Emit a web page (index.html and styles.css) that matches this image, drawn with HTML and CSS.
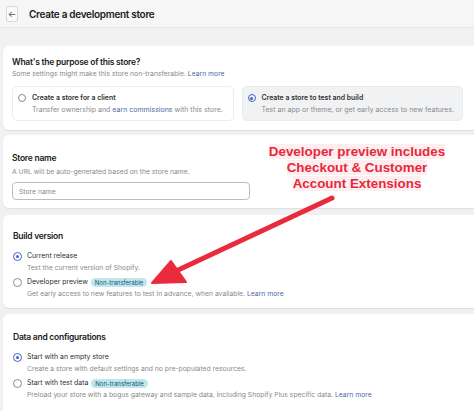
FILE: index.html
```html
<!DOCTYPE html>
<html lang="en">
<head>
    <meta charset="UTF-8">
    <title>Create a development store</title>
    <link rel="stylesheet" href="styles.css">
</head>
<body>
    <div class="topo">
        <div class="voltar">←</div>
        <div class="titulo">Create a development store</div>
    </div>

    <div class="pagina">
        <!-- Purpose -->
        <div class="cartao cartao-1">
            <div class="cab">What's the purpose of this store?</div>
            <div class="sub">Some settings might make this store non-transferable. <span class="link">Learn more</span></div>
            <div class="opcoes">
                <div class="opcao">
                    <div class="linha"><span class="radio"></span>Create a store for a client</div>
                    <div class="desc">Transfer ownership and <span class="link">earn commissions</span> with this store.</div>
                </div>
                <div class="opcao ativa">
                    <div class="linha"><span class="radio marcado"></span>Create a store to test and build</div>
                    <div class="desc">Test an app or theme, or get early access to new features.</div>
                </div>
            </div>
        </div>

        <!-- Store name -->
        <div class="cartao cartao-2">
            <div class="cab">Store name</div>
            <div class="sub">A URL will be auto-generated based on the store name.</div>
            <div class="campo">Store name</div>
        </div>

        <!-- Build version -->
        <div class="cartao cartao-3">
            <div class="cab">Build version</div>
            <div class="linha primeira"><span class="radio marcado"></span>Current release</div>
            <div class="desc">Test the current version of Shopify.</div>
            <div class="linha"><span class="radio"></span>Developer preview <span class="etiqueta">Non-transferable</span></div>
            <div class="desc">Get early access to new features to test in advance, when available. <span class="link">Learn more</span></div>
        </div>

        <!-- Data -->
        <div class="cartao cartao-4">
            <div class="cab">Data and configurations</div>
            <div class="linha primeira"><span class="radio marcado"></span>Start with an empty store</div>
            <div class="desc">Create a store with default settings and no pre-populated resources.</div>
            <div class="linha"><span class="radio"></span>Start with test data <span class="etiqueta">Non-transferable</span></div>
            <div class="desc">Preload your store with a bogus gateway and sample data, including Shopify Plus specific data. <span class="link">Learn more</span></div>
        </div>
    </div>

    <!-- Anotação -->
    <div class="nota">
        <span>Developer preview includes<br>Checkout &amp; Customer<br>Account Extensions</span>
    </div>
    <svg class="seta" width="474" height="411" viewBox="0 0 474 411">
        <line x1="332" y1="198" x2="176" y2="271" stroke="#ea2a3d" stroke-width="5" stroke-linecap="round"/>
        <polygon points="152,283 171,261 186,282" fill="#ea2a3d" stroke="#ea2a3d" stroke-width="2" stroke-linejoin="round"/>
    </svg>
</body>
</html>
```

FILE: styles.css
```css
body {
    margin: 0;
    padding: 0;
    background-color: #f1f1f1;
    font-family: Inter, "Open Sans", sans-serif;
    color: #303030;
    width: 474px;
    height: 411px;
    overflow: hidden;
    position: relative;
}

.topo {
    height: 28px;
    background-color: #f6f6f6;
    border-bottom: 1px solid #e9e9e9;
    display: flex;
    align-items: center;
    padding-left: 6px;
    box-sizing: border-box;
}

.voltar {
    width: 12px;
    height: 16px;
    border: 1px solid #d6d6d6;
    border-radius: 3px;
    background-color: #fbfbfb;
    font-size: 9px;
    color: #555;
    display: flex;
    align-items: center;
    justify-content: center;
    box-sizing: border-box;
}

.titulo {
    margin-left: 11px;
    font-size: 10px;
    letter-spacing: -0.3px;
    font-weight: 600;
    color: #202020;
}

.pagina {
    padding-top: 18px;
    padding-left: 3px;
}

.cartao {
    background-color: #fff;
    border-radius: 6px 0 0 6px;
    box-shadow: 0 1px 1px rgba(0, 0, 0, 0.08);
    padding: 10px 10px 9px 9px;
}

.cartao-2 {
    margin-top: 5px;
    padding-top: 17px;
    padding-bottom: 8px;
}

.cartao-3 {
    margin-top: 7px;
    padding-top: 15px;
    padding-left: 10px;
    padding-bottom: 8px;
}

.cartao-4 {
    margin-top: 6px;
    padding-top: 17px;
    padding-left: 10px;
    height: 80px;
}

.cab {
    font-size: 8.5px;
    letter-spacing: -0.25px;
    line-height: 12px;
    font-weight: 600;
    color: #202020;
}

.sub,
.desc {
    font-size: 6.8px;
    line-height: 12px;
    color: #8a8a8a;
}

.cartao-2 .sub {
    margin-top: 2px;
}

.link {
    color: #4a6aa5;
}

.opcoes {
    display: flex;
    gap: 8px;
    margin-top: 6px;
    margin-right: 1px;
}

.opcao {
    flex: 1;
    height: 35px;
    box-sizing: border-box;
    border: 1px solid #ececec;
    border-radius: 5px;
    padding: 5px 0 0 5px;
}

.opcao.ativa {
    background-color: #f1f2f4;
    border-color: #e9eaec;
}

.opcao .desc {
    padding-left: 14px;
    font-size: 7px;
}

.linha {
    display: flex;
    align-items: center;
    font-size: 6.9px;
    line-height: 12px;
    color: #303030;
}

.opcao .linha {
    font-weight: 600;
    font-size: 6.9px;
}

.radio {
    width: 8px;
    height: 8px;
    border: 1px solid #8a8a8a;
    border-radius: 50%;
    box-sizing: border-box;
    margin-right: 6px;
    position: relative;
    flex-shrink: 0;
}

.radio.marcado {
    border-color: #3f63c2;
}

.radio.marcado::after {
    content: "";
    position: absolute;
    left: 1.5px;
    top: 1.5px;
    width: 3px;
    height: 3px;
    border-radius: 50%;
    background-color: #3f63c2;
}

.cartao-3 .radio,
.cartao-4 .radio {
    width: 9px;
    height: 9px;
    margin-right: 5px;
}

.cartao-3 .radio.marcado::after,
.cartao-4 .radio.marcado::after {
    left: 2px;
    top: 2px;
}

.cartao-3 .linha,
.cartao-4 .linha {
    margin-top: 2px;
}

.cartao-3 .linha.primeira,
.cartao-4 .linha.primeira {
    margin-top: 8px;
}

.cartao-3 .desc,
.cartao-4 .desc {
    padding-left: 14px;
    white-space: nowrap;
}

.etiqueta {
    margin-left: 3px;
    background-color: #bfe6f0;
    color: #18536b;
    font-size: 6px;
    line-height: 9px;
    padding: 0 4px;
    border-radius: 5px;
}

.campo {
    margin-top: 4px;
    width: 238px;
    height: 18px;
    box-sizing: border-box;
    border: 1px solid #bdbdbd;
    border-radius: 4px;
    font-size: 6.8px;
    color: #8a8a8a;
    padding-left: 6px;
    display: flex;
    align-items: center;
}

.nota {
    position: absolute;
    left: 258px;
    top: 144px;
    width: 198px;
    text-align: center;
    font-family: "Liberation Sans", Arial, sans-serif;
    font-weight: bold;
    font-size: 13.4px;
    line-height: 16px;
    color: #e8283c;
}

.nota span {
    background-color: #fdeef0;
}

.seta {
    position: absolute;
    left: 0;
    top: 0;
}
```
